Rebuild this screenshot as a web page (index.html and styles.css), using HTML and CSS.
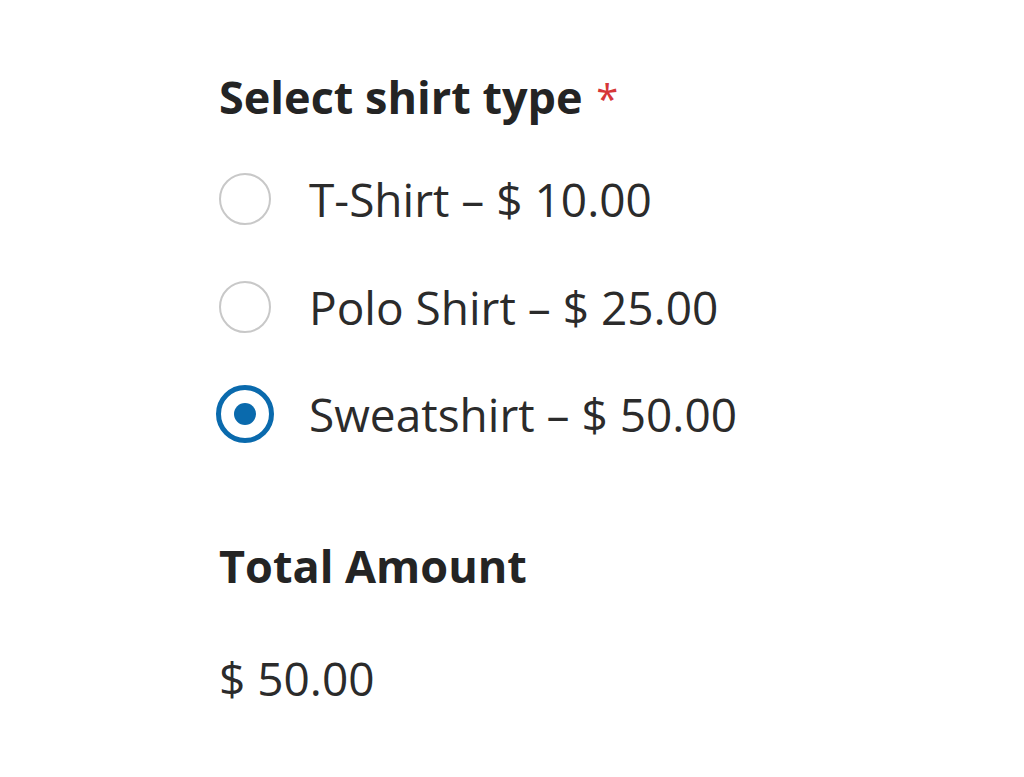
FILE: index.html
```html
<!DOCTYPE html>
<html>
<head>
<meta charset="utf-8">
<link rel="stylesheet" href="styles.css">
</head>
<body>
<div class="form">
  <fieldset class="field">
    <legend class="label">Select shirt type <span class="req">*</span></legend>
    <div class="options">
      <label class="option"><span class="radio"></span><span class="text">T-Shirt – $ 10.00</span></label>
      <label class="option"><span class="radio"></span><span class="text">Polo Shirt – $ 25.00</span></label>
      <label class="option"><span class="radio checked"></span><span class="text">Sweatshirt – $ 50.00</span></label>
    </div>
  </fieldset>
  <div class="total">
    <div class="label">Total Amount</div>
    <div class="amount">$ 50.00</div>
  </div>
</div>
</body>
</html>
```
FILE: styles.css
```css
html, body { margin: 0; padding: 0; background: #fff; }
body {
  font-family: "Open Sans", "Noto Sans", sans-serif;
  color: #2b2b2b;
}
.form { padding: 67px 0 0 219px; }
.field { border: 0; margin: 0; padding: 0; }
.label {
  font-weight: 700;
  font-size: 45px;
  line-height: 60px;
  padding: 0;
  color: #242424;
}
.req { color: #d63638; font-weight: 400; font-size: 40px; margin-left: 2px; }
.options { display: flex; flex-direction: column; gap: 47.5px; margin-top: 40px; }
.option { display: flex; align-items: center; gap: 38px; height: 60px; }
.text { font-size: 46px; line-height: 60px; }
.radio {
  box-sizing: border-box;
  width: 52px; height: 52px;
  border-radius: 50%;
  border: 2px solid #c8c8c8;
  display: flex; align-items: center; justify-content: center;
  flex: none;
}
.radio.checked {
  width: 58px; height: 58px;
  margin-left: -3px; margin-right: -3px;
  border: 5px solid #0a6aad;
}
.radio.checked::after {
  content: "";
  width: 22px; height: 22px; border-radius: 50%;
  background: #0a6aad;
}
.total { margin-top: 92px; }
.amount { font-size: 46px; line-height: 60px; margin-top: 52px; }
```
